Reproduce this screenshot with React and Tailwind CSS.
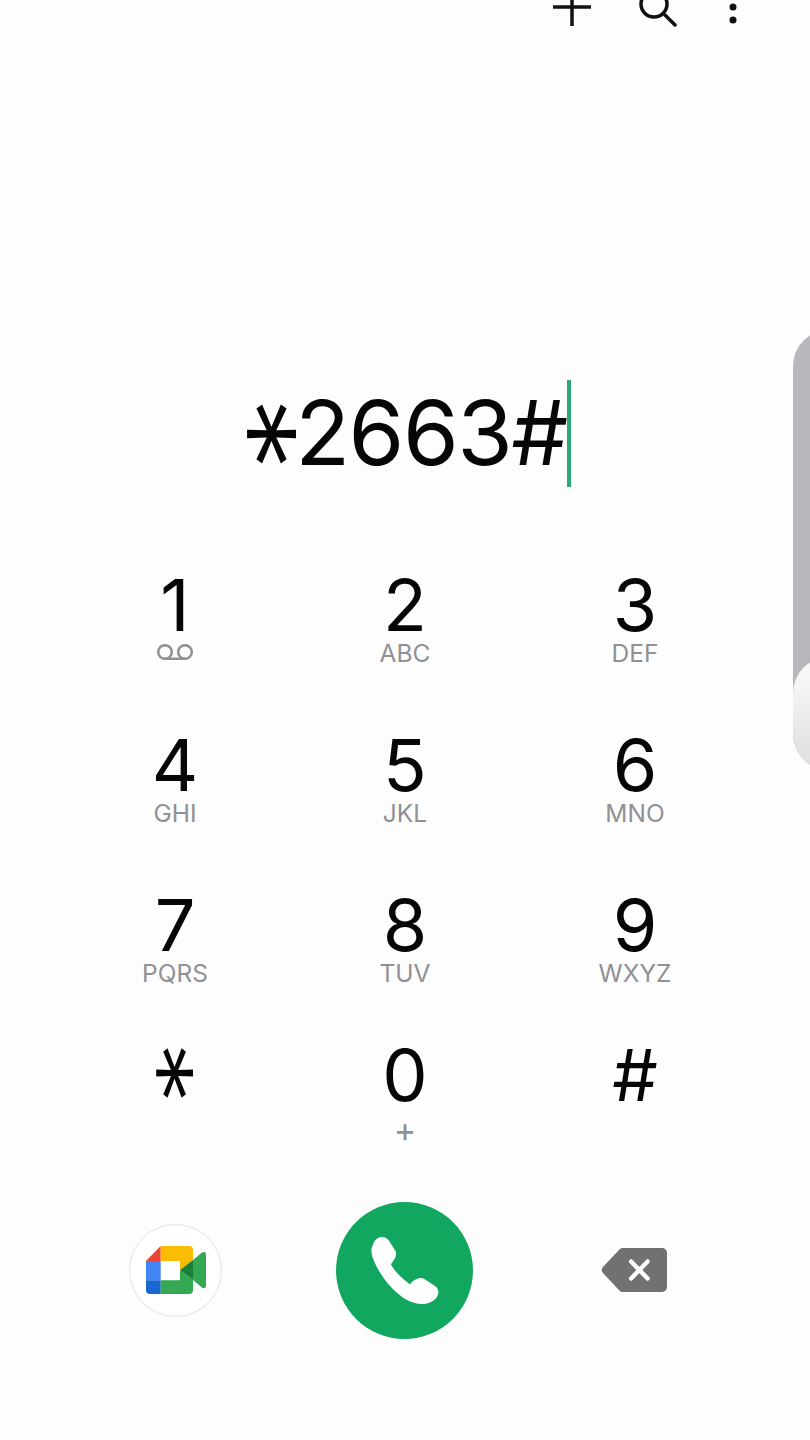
const keys = [
  { digit: "1", voicemail: true },
  { digit: "2", label: "ABC" },
  { digit: "3", label: "DEF" },
  { digit: "4", label: "GHI" },
  { digit: "5", label: "JKL" },
  { digit: "6", label: "MNO" },
  { digit: "7", label: "PQRS" },
  { digit: "8", label: "TUV" },
  { digit: "9", label: "WXYZ" },
  { digit: "*", star: true },
  { digit: "0", plus: true, last: true },
  { digit: "#", last: true },
];

function VoicemailIcon() {
  return (
    <svg width="38" height="16" viewBox="0 0 38 16" fill="none" stroke="#909095" strokeWidth="2.5" className="mt-[3px]">
      <circle cx="9" cy="8" r="6.8" />
      <circle cx="29" cy="8" r="6.8" />
      <path d="M9 14.8h20" />
    </svg>
  );
}

function MeetIcon() {
  return (
    <svg width="60" height="48" viewBox="0 0 60 48">
      <path d="M14.7 0 0 15h14.7z" fill="#ea4335" />
      <path d="M14.7 0H43a4 4 0 0 1 4 4v10L34 24V15H14.7z" fill="#fbbc04" />
      <path d="M0 15h14.7v19.3H0z" fill="#4285f4" />
      <path d="M0 34.3h14.7V48H4a4 4 0 0 1-4-4z" fill="#1967d2" />
      <path d="M14.7 34.3H34V24l13 10v10a4 4 0 0 1-4 4H14.7z" fill="#34a853" />
      <path d="M34 24 47 14v20z" fill="#188038" />
      <path d="M47 14 56 6.500c1.500-1.200 4-.5 4 1.500v32c0 2-2.500 2.700-4 1.500L47 34z" fill="#34a853" />
    </svg>
  );
}

function CallIcon() {
  return (
    <svg width="137" height="137" viewBox="18 18 412 412">
      <path
        d="M130 145C135 122 165 115 178 135L197 165C202 178 195 190 183 205C195 230 220 250 240 265C255 250 268 242 285 250L318 272C332 285 326 305 310 315C285 332 255 325 230 312C188 287 150 240 130 190C122 170 124 155 130 145Z"
        fill="#ffffff"
      />
    </svg>
  );
}

function BackspaceIcon() {
  return (
    <svg width="66" height="44" viewBox="0 0 68 44" preserveAspectRatio="none" className="-mt-[2px] -ml-[2px]">
      <path d="M19 1.500C20 .5 21 0 22.500 0H63a5 5 0 0 1 5 5v34a5 5 0 0 1-5 5H22.500c-1.500 0-2.500-.5-3.500-1.500L2 25c-1.700-1.800-1.700-4.200 0-6z" fill="#717171" />
      <path d="M31 13.500 48 30.500M48 13.500 31 30.500" stroke="#ffffff" strokeWidth="4.500" strokeLinecap="round" />
    </svg>
  );
}

function Key({ item }) {
  return (
    <div className="flex h-[160px] flex-col items-center">
      {item.star ? (
        <div className="flex h-[72px] items-center justify-center leading-none -mt-[12px] mb-[12px]">
          <span className="block -translate-x-[15px] rotate-90 scale-x-[1.8] scale-y-[1.25] text-[72px] leading-none font-light">*</span>
        </div>
      ) : (
        <div className={"h-[72px] text-[72px] leading-[71px] " + (item.last ? "-mt-[10px] mb-[10px]" : "")}>{item.digit}</div>
      )}
      {item.voicemail && <VoicemailIcon />}
      {item.label && <div className="text-[24.5px] leading-[24px] text-[#909095]">{item.label}</div>}
      {item.plus && <div className="-mt-[3px] text-[34px] leading-[24px] text-[#909095]">+</div>}
    </div>
  );
}

export default function App() {
  return (
    <div className="relative h-[1440px] w-[810px] overflow-hidden bg-[#fdfdfd] font-['Inter',sans-serif] text-[#060606]">
      <div className="flex h-[27px] items-start justify-end gap-[46px] pr-[72px]">
        <svg width="40" height="27" viewBox="0 0 40 27" fill="none" stroke="#111111" strokeWidth="3.5">
          <path d="M1 7h38M20 0v26" />
        </svg>
        <svg width="40" height="27" viewBox="0 0 40 27" fill="none" stroke="#111111" strokeWidth="3.500" strokeLinecap="round">
          <circle cx="16" cy="4" r="13" />
          <path d="M27 15 37 25" />
        </svg>
        <svg width="10" height="27" viewBox="0 0 10 27" fill="#111111" className="ml-[4px]">
          <circle cx="5" cy="7" r="3.500" />
          <circle cx="5" cy="20" r="3.500" />
        </svg>
      </div>

      <div className="mt-[353px] flex h-[107px] items-center justify-center pl-[3px]">
        <span className="block w-[53px] text-center text-[92px] leading-none font-light">
          <span className="inline-block -translate-x-[17px] rotate-90 scale-x-[1.68] scale-y-[1.3]">*</span>
        </span>
        <span className="-mt-[2px] text-[90px] leading-none tracking-[-1.5px]">2663#</span>
        <span className="h-[107px] w-[4px] bg-[#2aa876]" />
      </div>

      <div className="mt-[82px] grid grid-cols-3 px-[60px]">
        {keys.map((item) => (
          <Key key={item.digit} item={item} />
        ))}
      </div>

      <div className="mt-[-7px] grid grid-cols-3 items-center px-[60px]">
        <div className="flex justify-center">
          <div className="flex h-[93px] w-[93px] items-center justify-center rounded-full border border-[#e2e2e2] bg-white pl-[1px] pb-[2px]">
            <MeetIcon />
          </div>
        </div>
        <div className="flex justify-center">
          <div className="-ml-[1px] flex h-[137px] w-[137px] items-center justify-center rounded-full bg-[#12a75f]">
            <CallIcon />
          </div>
        </div>
        <div className="flex justify-center">
          <BackspaceIcon />
        </div>
      </div>

      {/* edge panel handle */}
      <div className="absolute -right-[43px] top-[330px] h-[440px] w-[60px] overflow-hidden rounded-l-[36px] bg-[#b7b7bc]">
        <div className="absolute bottom-0 left-0 h-[113px] w-full rounded-l-[36px] bg-gradient-to-b from-[#fbfbfb] to-[#dedede]" />
      </div>
    </div>
  );
}
